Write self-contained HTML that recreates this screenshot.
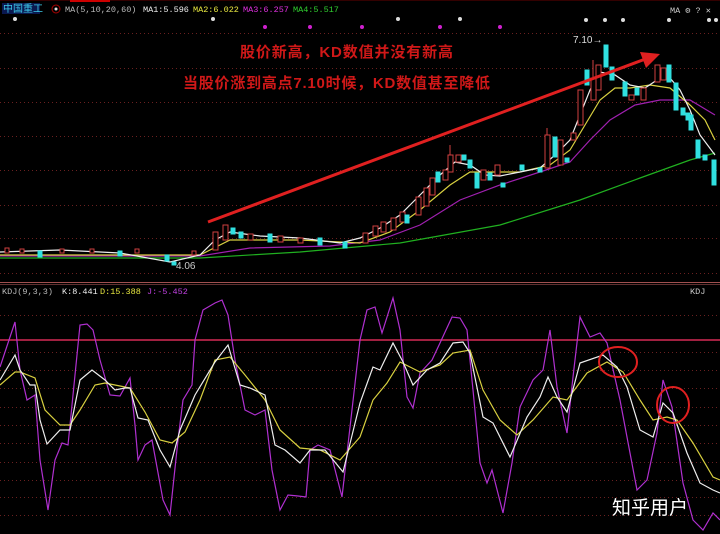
<!DOCTYPE html>
<html><head><meta charset="utf-8"><style>
html,body{margin:0;padding:0;background:#000;width:720px;height:534px;overflow:hidden}
svg{display:block}
text{font-family:"Liberation Sans","Noto Sans CJK SC",sans-serif}
.m{font-family:"Liberation Mono","Noto Sans CJK SC",monospace;font-size:8.5px}
</style></head><body>
<svg width="720" height="534" viewBox="0 0 720 534" xmlns="http://www.w3.org/2000/svg">
<rect width="720" height="534" fill="#000"/>
<g stroke="#6a2020" stroke-width="1" stroke-dasharray="1,3">
<line x1="0" y1="33.5" x2="720" y2="33.5"/><line x1="0" y1="68.5" x2="720" y2="68.5"/>
<line x1="0" y1="102.5" x2="720" y2="102.5"/><line x1="0" y1="136.5" x2="720" y2="136.5"/>
<line x1="0" y1="170.5" x2="720" y2="170.5"/><line x1="0" y1="205.5" x2="720" y2="205.5"/>
<line x1="0" y1="238.5" x2="720" y2="238.5"/><line x1="0" y1="273.5" x2="720" y2="273.5"/>
<line x1="0" y1="315.5" x2="720" y2="315.5"/><line x1="0" y1="352.5" x2="720" y2="352.5"/>
<line x1="0" y1="370.5" x2="720" y2="370.5"/><line x1="0" y1="388.5" x2="720" y2="388.5"/>
<line x1="0" y1="407.5" x2="720" y2="407.5"/><line x1="0" y1="425.5" x2="720" y2="425.5"/>
<line x1="0" y1="443.5" x2="720" y2="443.5"/><line x1="0" y1="462.5" x2="720" y2="462.5"/>
<line x1="0" y1="480.5" x2="720" y2="480.5"/><line x1="0" y1="497.5" x2="720" y2="497.5"/>
<line x1="0" y1="515.5" x2="720" y2="515.5"/>
</g>
<rect x="0" y="0" width="720" height="1" fill="#300"/>
<rect x="70" y="0" width="40" height="2" fill="#c00"/>
<rect x="2" y="3" width="38" height="11" fill="#0a1850"/>
<text x="3" y="12" font-size="10" fill="#3cc8e8">中国重工</text>
<circle cx="56" cy="9" r="4" fill="none" stroke="#a00" stroke-width="1"/><circle cx="56" cy="9" r="1.5" fill="#ddd"/>
<text x="65" y="12" class="m" fill="#bbb">MA(5,10,20,60)</text>
<text x="143" y="12" class="m" fill="#eee">MA1:5.596</text>
<text x="193" y="12" class="m" fill="#e8e840">MA2:6.022</text>
<text x="243" y="12" class="m" fill="#e030e0">MA3:6.257</text>
<text x="293" y="12" class="m" fill="#30d030">MA4:5.517</text>
<text x="670" y="13" class="m" fill="#ccc">MA ⚙ ? ✕</text>
<g fill="#ddd"><circle cx="15" cy="19" r="2"/><circle cx="213" cy="19" r="2"/><circle cx="398" cy="19" r="2"/><circle cx="586" cy="20" r="2"/><circle cx="605" cy="20" r="2"/><circle cx="623" cy="20" r="2"/><circle cx="669" cy="20" r="2"/><circle cx="709" cy="20" r="2"/><circle cx="716" cy="20" r="2"/></g>
<g fill="#d020d0"><circle cx="265" cy="27" r="2"/><circle cx="310" cy="27" r="2"/><circle cx="362" cy="27" r="2"/><circle cx="440" cy="27" r="2"/><circle cx="460" cy="19" r="2" fill="#ddd"/><circle cx="500" cy="27" r="2"/></g>

<g fill="none" stroke-width="1.2">
<polyline stroke="#20b020" points="0,258 200,258 300,252 400,243 500,225 580,200 640,178 690,160 715,153"/>
<polyline stroke="#a020b0" points="0,256 200,256 250,248 330,246 380,240 420,225 460,200 500,185 540,172 570,162 590,140 610,120 635,105 660,100 690,100 715,115"/>
<polyline stroke="#d8d040" points="0,255 200,255 230,240 300,240 360,243 390,232 420,210 450,185 470,172 490,172 520,172 550,165 570,150 585,125 600,100 615,88 630,88 650,85 670,88 690,105 705,120 715,140"/>
<polyline stroke="#eee" points="0,252 60,250 120,253 170,262 200,255 215,240 230,232 260,236 300,238 340,243 360,238 380,228 400,215 420,195 440,175 455,162 470,165 485,175 500,176 520,172 540,168 555,155 570,140 580,115 590,90 600,72 615,75 630,85 645,88 660,78 670,78 680,90 690,110 700,135 715,155"/>
</g>
<g stroke="#d04040" fill="#000" stroke-width="1">
<rect x="5" y="248" width="4" height="5"/><rect x="20" y="249" width="4" height="4"/><rect x="60" y="249" width="4" height="4"/><rect x="90" y="249" width="4" height="4"/><rect x="135" y="249" width="4" height="4"/><rect x="192" y="251" width="4" height="4"/>
<rect x="213" y="232" width="5" height="18"/><rect x="223" y="225" width="5" height="15"/><rect x="248" y="234" width="5" height="6"/><rect x="278" y="236" width="5" height="6"/><rect x="298" y="238" width="5" height="5"/>
<rect x="363" y="233" width="5" height="10"/><rect x="373" y="226" width="5" height="10"/><rect x="381" y="222" width="5" height="10"/><rect x="391" y="218" width="5" height="12"/><rect x="400" y="212" width="5" height="10"/>
<rect x="416" y="197" width="5" height="18"/><rect x="424" y="188" width="5" height="18"/><rect x="430" y="178" width="5" height="17"/><rect x="443" y="170" width="5" height="10"/><rect x="448" y="155" width="5" height="17"/><rect x="456" y="155" width="5" height="7"/>
<rect x="481" y="170" width="5" height="10"/><rect x="495" y="165" width="5" height="10"/><rect x="545" y="135" width="5" height="33"/><rect x="558" y="140" width="5" height="25"/><rect x="571" y="133" width="5" height="7"/>
<rect x="578" y="90" width="5" height="35"/><rect x="591" y="78" width="5" height="22"/><rect x="596" y="65" width="5" height="25"/><rect x="629" y="95" width="5" height="5"/><rect x="641" y="88" width="5" height="12"/><rect x="655" y="65" width="5" height="17"/><rect x="661" y="68" width="5" height="12"/>
</g>
<g stroke="#d04040" stroke-width="1"><line x1="593" y1="60" x2="593" y2="78"/><line x1="450" y1="145" x2="450" y2="155"/><line x1="547" y1="128" x2="547" y2="135"/></g>
<g fill="#30e0e0" stroke="#30e0e0" stroke-width="1">
<rect x="38" y="251" width="4" height="6"/><rect x="118" y="251" width="4" height="5"/><rect x="165" y="255" width="4" height="6"/><rect x="172" y="262" width="4" height="3"/>
<rect x="231" y="228" width="4" height="6"/><rect x="239" y="232" width="4" height="6"/><rect x="268" y="234" width="4" height="8"/><rect x="318" y="238" width="4" height="7"/><rect x="343" y="242" width="4" height="6"/>
<rect x="405" y="215" width="4" height="8"/><rect x="436" y="172" width="4" height="10"/><rect x="462" y="155" width="4" height="5"/><rect x="468" y="160" width="4" height="8"/><rect x="475" y="173" width="4" height="15"/><rect x="488" y="173" width="4" height="7"/><rect x="501" y="183" width="4" height="4"/><rect x="520" y="165" width="4" height="5"/><rect x="538" y="168" width="4" height="4"/>
<rect x="553" y="137" width="4" height="20"/><rect x="565" y="158" width="4" height="4"/><rect x="585" y="70" width="4" height="15"/><rect x="604" y="45" width="4" height="22"/><rect x="610" y="67" width="4" height="13"/><rect x="623" y="82" width="4" height="14"/><rect x="635" y="88" width="4" height="7"/>
<rect x="667" y="65" width="4" height="17"/><rect x="674" y="83" width="4" height="27"/><rect x="681" y="108" width="4" height="7"/><rect x="686" y="113" width="4" height="7"/><rect x="689" y="115" width="4" height="15"/><rect x="696" y="140" width="4" height="18"/><rect x="703" y="155" width="4" height="5"/><rect x="712" y="160" width="4" height="25"/>
</g>
<text x="573" y="43" font-size="10" fill="#ddd">7.10→</text>
<text x="176" y="269" font-size="10" fill="#ccc">4.06</text>
<line x1="208" y1="222" x2="648" y2="58" stroke="#e02020" stroke-width="3"/>
<polygon points="660,54 640,52 646,68" fill="#e02020"/>
<text x="240" y="57" font-size="15" font-weight="bold" fill="#d01818" textLength="213">股价新高，KD数值并没有新高</text>
<text x="183" y="88" font-size="15" font-weight="bold" fill="#d01818" textLength="307">当股价涨到高点7.10时候，KD数值甚至降低</text>
<rect x="0" y="282" width="720" height="1" fill="#a05050"/>
<rect x="0" y="284" width="720" height="1" fill="#603030"/>
<text x="2" y="294" class="m" fill="#bbb">KDJ(9,3,3)</text>
<text x="62" y="294" class="m" fill="#eee">K:8.441</text>
<text x="100" y="294" class="m" fill="#e8e840">D:15.388</text>
<text x="147" y="294" class="m" fill="#c040e0">J:-5.452</text>
<text x="690" y="294" class="m" fill="#ccc">KDJ</text>
<rect x="0" y="339" width="720" height="2" fill="#a02040"/>
<g fill="none" stroke-width="1.2">
<polyline stroke="#b030d0" points="0,367 15,322 20,370 27,400 35,395 40,460 48,510 55,460 62,443 68,445 80,325 87,324 93,330 100,360 110,395 120,396 130,378 135,425 138,460 145,445 152,440 163,500 170,515 178,440 183,400 192,385 195,340 203,310 215,303 222,300 228,315 235,360 245,410 255,415 265,410 272,470 280,510 288,495 298,496 306,497 310,450 318,445 330,450 342,497 360,340 367,310 375,307 382,333 393,298 400,330 407,397 413,408 420,373 432,360 440,343 452,317 460,318 467,330 473,390 480,463 487,483 492,470 503,513 512,463 520,407 533,380 543,370 550,330 557,387 567,433 573,377 580,317 590,337 600,333 607,343 620,400 637,490 647,480 657,433 663,380 672,407 683,483 693,520 703,530 713,513 720,520"/>
<polyline stroke="#d8d040" points="0,385 15,372 20,372 35,378 45,410 60,425 70,425 80,410 95,385 105,383 120,386 130,388 145,412 160,440 172,443 185,432 200,400 215,360 230,357 245,375 265,400 280,430 300,448 320,450 340,460 360,437 373,400 387,383 400,362 420,372 440,365 453,353 470,350 483,390 500,420 517,435 533,420 553,397 567,400 587,373 607,362 623,372 640,400 653,420 667,417 677,420 693,443 713,477 720,480"/>
<polyline stroke="#eee" points="0,380 15,355 20,370 30,385 35,385 40,420 47,444 60,430 70,430 80,380 92,370 105,380 115,390 125,388 130,388 138,418 148,420 160,450 170,467 180,430 195,395 215,362 228,345 240,385 250,388 265,395 275,445 285,450 300,463 310,450 325,450 343,472 360,403 373,367 380,370 393,343 403,362 413,385 427,370 440,363 453,343 463,342 470,353 483,417 493,423 510,457 527,417 540,397 548,377 557,397 567,412 580,363 603,355 617,367 627,387 640,430 653,437 663,403 673,413 687,453 700,483 713,490 720,493"/>
</g>
<ellipse cx="618" cy="362" rx="19" ry="15" fill="none" stroke="#e02020" stroke-width="2"/>
<ellipse cx="673" cy="405" rx="16" ry="18" fill="none" stroke="#e02020" stroke-width="2"/>
<text x="612" y="514" font-size="19" fill="#fff">知乎用户</text>
</svg>
</body></html>
